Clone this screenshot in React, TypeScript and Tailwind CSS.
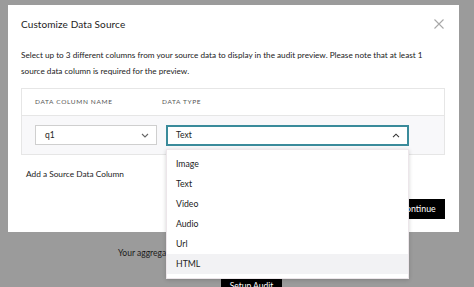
import React from "react";

const font = { fontFamily: '"Lato", "Liberation Sans", sans-serif' };

function Chevron({ up }: { up?: boolean }) {
  return (
    <svg width="8" height="5" viewBox="0 0 8 5" fill="none" className="block">
      {up ? (
        <path d="M1 4.2 L4 1.2 L7 4.2" stroke="#333" strokeWidth="1.1" />
      ) : (
        <path d="M1 1 L4 4 L7 1" stroke="#666" strokeWidth="1.1" />
      )}
    </svg>
  );
}

export default function App() {
  const items = ["Image", "Text", "Video", "Audio", "Url", "HTML"];
  return (
    <div
      className="relative w-[474px] h-[287px] overflow-hidden bg-[#9b9b9b] text-[#222]"
      style={font}
    >
      {/* dimmed page behind */}
      <div className="flex flex-col pt-[247px]">
        <div className="text-[8.5px] leading-[12px] text-[#1a1a1a] pl-[118px]">
          Your aggregated data will appear here
        </div>
        <div className="mt-[20px] ml-[221px] w-[61px] h-[20px] bg-black text-white text-[8.5px] leading-[12px] flex justify-center pt-[1px]">
          Setup Audit
        </div>
      </div>

      {/* modal */}
      <div className="absolute left-[8px] top-[5px] w-[451px] h-[227px] bg-white pl-[13px] pr-[14px] pt-[10px]">
        <div className="flex items-center justify-between h-[18px]">
          <div className="text-[10px] leading-[18px] text-[#1c1c1c] tracking-[0.01em]">Customize Data Source</div>
          <svg width="10" height="10" viewBox="0 0 10 10" className="mr-[1px]">
            <path d="M0.5 0.5 L9.5 9.5 M9.5 0.5 L0.5 9.5" stroke="#a8a8a8" strokeWidth="1.1" />
          </svg>
        </div>
        <div className="mt-[14px] text-[8.2px] leading-[16px] text-[#222] whitespace-nowrap">
          Select up to 3 different columns from your source data to display in the audit preview. Please note that at least 1
          <br />
          source data column is required for the preview.
        </div>
        <div className="mt-[9px] border border-[#e6e6e6]">
          <div className="h-[27px] flex items-center border-b border-[#e6e6e6] text-[6.5px] tracking-[0.1em] text-[#555] pl-[13px]">
            <div className="w-[127px]">DATA COLUMN NAME</div>
            <div>DATA TYPE</div>
          </div>
          <div className="h-[38px] bg-[#f8f8fa] flex items-center pl-[13px] gap-[9px]">
            <div className="w-[122px] h-[20px] bg-white border border-[#cfcfcf] flex items-center justify-between pl-[9px] pr-[7px] text-[8.5px]">
              <span>q1</span>
              <Chevron />
            </div>
            <div className="w-[243px] h-[21px] bg-white border-2 border-[#3a8b9b] flex items-center justify-between pl-[8px] pr-[7px] text-[8.5px]">
              <span>Text</span>
              <Chevron up />
            </div>
          </div>
        </div>
        <div className="flex justify-between items-start">
          <div className="mt-[12px] pl-[5px] text-[8.3px] leading-[14px]">Add a Source Data Column</div>
          <div className="mt-[44px] w-[54px] h-[20px] bg-black text-white text-[8.8px] flex items-center justify-center">
            Continue
          </div>
        </div>
      </div>

      {/* dropdown menu */}
      <div className="absolute left-[166px] top-[149px] w-[243px] bg-white border border-[#ece6ea] shadow-[0_1px_4px_rgba(0,0,0,0.18)] py-[4px]">
        {items.map((it) => (
          <div
            key={it}
            className={
              "h-[20px] flex items-center pl-[9px] text-[8.7px] text-[#222] " +
              (it === "HTML" ? "bg-[#f2f2f4]" : "")
            }
          >
            {it}
          </div>
        ))}
      </div>
    </div>
  );
}
